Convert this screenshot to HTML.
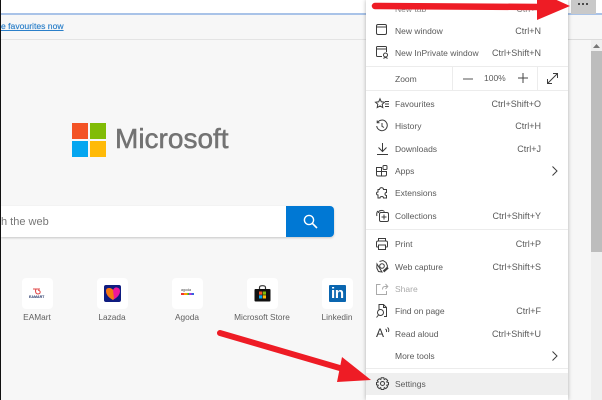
<!DOCTYPE html>
<html><head><meta charset="utf-8">
<style>
html,body{margin:0;padding:0;background:#f7f7f7}
#p{width:602px;height:400px;position:relative;overflow:hidden;background:#f7f7f7;font-family:"Liberation Sans",sans-serif;color:#444;filter:blur(.3px)}
.a{position:absolute;white-space:nowrap}
.m{position:absolute;left:395px;font-size:8.5px;line-height:12px;color:#5a5a5a;white-space:nowrap}
.k{position:absolute;right:61px;font-size:9px;line-height:12px;color:#5a5a5a;white-space:nowrap}
.t{position:absolute;width:31px;height:31px;background:#fff;border-radius:4px;top:278px}
.l{position:absolute;top:311px;font-size:8.3px;line-height:12px;color:#5f5f5f;text-align:center;white-space:nowrap;transform:translateX(-50%)}
svg{position:absolute;overflow:visible}
.i{fill:none;stroke:#3c3c3c;stroke-width:1}
</style></head><body><div id="p">
<div class="a" style="left:0;top:0;width:602px;height:13px;background:#fff"></div>
<div class="a" style="left:0;top:13px;width:602px;height:2px;background:#a9c3e8"></div>
<div class="a" style="left:0;top:39px;width:602px;height:1px;background:#e4e4e4"></div>
<div class="a" style="left:0;top:0;width:1px;height:400px;background:#111"></div>
<div class="a" style="left:1px;top:20px;font-size:8.600px;line-height:12px;color:#2a7fc9;text-decoration:underline;-webkit-text-stroke:.15px #2a7fc9">e favourites now</div>

<!-- MS logo -->
<div class="a" style="left:72px;top:123px;width:16px;height:16px;background:#f35325"></div>
<div class="a" style="left:90px;top:123px;width:16px;height:16px;background:#81bc06"></div>
<div class="a" style="left:72px;top:141px;width:16px;height:16px;background:#05a6f0"></div>
<div class="a" style="left:90px;top:141px;width:16px;height:16px;background:#ffba08"></div>
<div class="a" style="left:115px;top:122px;font-size:28px;line-height:34px;color:#737373;-webkit-text-stroke:.5px #737373">Microsoft</div>

<!-- Search -->
<div class="a" style="left:1px;top:206px;width:333px;height:31px;background:#fff;border-radius:0 4px 4px 0;box-shadow:0 1px 2px rgba(0,0,0,.2)"></div>
<div class="a" style="left:1px;top:214.500px;font-size:11px;line-height:14px;color:#777">h the web</div>
<div class="a" style="left:286px;top:206px;width:48px;height:31px;background:#0078d4;border-radius:0 4px 4px 0"></div>
<svg style="left:303px;top:214px" width="15" height="15" viewBox="0 0 15 15"><circle cx="6" cy="6" r="4.600" fill="none" stroke="#fff" stroke-width="1.400"/><path d="M9.300 9.300L14 14" stroke="#fff" stroke-width="1.600"/></svg>

<!-- Tiles -->
<div class="t" style="left:22px"></div>
<svg style="left:32px;top:288px" width="10" height="8" viewBox="0 0 10 8"><path d="M1 1H8M4 1Q3 3 4 5Q6 7 8 5Q9 3 6 2" fill="none" stroke="#e04848" stroke-width="1"/></svg>
<div class="a" style="left:29px;top:295px;font-size:3.600px;line-height:4px;font-weight:bold;color:#223366">EAMART</div>
<div class="l" style="left:37px">EAMart</div>
<div class="t" style="left:97px"></div>
<div class="a" style="left:104px;top:285px;width:17px;height:17px;background:#0f1c80;border-radius:2px"></div>
<svg style="left:105.500px;top:287px" width="14" height="13" viewBox="0 0 14 13"><path d="M0 4Q0 1 3 1Q5.500 1 7 3Q8.500 0 11 0.500Q14 1 14 4.500Q14 9 7 13Q0 9 0 4Z" fill="#f0189a"/><path d="M0 4Q0 1 3 1Q5.500 1 7 3L8 11.500L7 13Q0 9 0 4Z" fill="#f57a10"/></svg>
<div class="l" style="left:112px">Lazada</div>
<div class="t" style="left:172px"></div>
<div class="a" style="left:181px;top:288px;font-size:3.600px;line-height:4px;color:#444">agoda</div>
<div class="a" style="left:181px;top:293px;width:13px;height:2px;background:linear-gradient(90deg,#e33 0 25%,#f90 25% 50%,#3b3 50% 62%,#a3d 62% 80%,#36d 80%)"></div>
<div class="l" style="left:187px">Agoda</div>
<div class="t" style="left:247px"></div>
<svg style="left:254px;top:285px" width="17" height="17" viewBox="0 0 17 17"><path d="M5.500 4V2.500Q5.500 .7 8.500 .7Q11.500 .7 11.500 2.500V4" fill="none" stroke="#333" stroke-width="1.200"/><rect x="0.500" y="4" width="16" height="12.500" rx="1" fill="#111"/><rect x="5" y="6.500" width="3.200" height="3.200" fill="#f35325"/><rect x="8.800" y="6.500" width="3.200" height="3.200" fill="#81bc06"/><rect x="5" y="10.300" width="3.200" height="3.200" fill="#05a6f0"/><rect x="8.800" y="10.300" width="3.200" height="3.200" fill="#ffba08"/></svg>
<div class="l" style="left:262px">Microsoft Store</div>
<div class="t" style="left:322px"></div>
<div class="a" style="left:329px;top:285px;width:17px;height:17px;background:#0a66b0;border-radius:1px"></div>
<div class="a" style="left:331px;top:284px;font-size:15px;line-height:19px;font-weight:bold;color:#fff;letter-spacing:-.3px">in</div>
<div class="l" style="left:337px">Linkedin</div>

<!-- Right chrome -->
<div class="a" style="left:568px;top:15px;width:34px;height:385px;background:#f7f7f7"></div>
<div class="a" style="left:568px;top:39px;width:34px;height:1px;background:#dcdcdc"></div>
<div class="a" style="left:591px;top:40px;width:11px;height:360px;background:#efefef"></div>
<div class="a" style="left:591px;top:51px;width:11px;height:201px;background:#bdbdbd"></div>
<svg style="left:593px;top:44px" width="7" height="4"><path d="M0 4L3.500 0L7 4Z" fill="#777"/></svg>
<div class="a" style="left:571px;top:0;width:25px;height:14px;background:#c9c9c9"></div>
<div class="a" style="left:578px;top:3px;width:2px;height:2px;background:#222;border-radius:50%;box-shadow:4px 0 #222,8px 0 #222"></div>

<!-- Menu -->
<div class="a" style="left:366px;top:0;width:202px;height:400px;background:#fff;box-shadow:0 0 4px rgba(0,0,0,.3)"></div>
<div class="a" style="left:366px;top:66px;width:202px;height:1px;background:#ececec"></div>
<div class="a" style="left:366px;top:90px;width:202px;height:1px;background:#ececec"></div>
<div class="a" style="left:366px;top:229px;width:202px;height:1px;background:#ececec"></div>
<div class="a" style="left:366px;top:368px;width:202px;height:1px;background:#ececec"></div>
<div class="a" style="left:452px;top:67px;width:1px;height:23px;background:#ececec"></div>
<div class="a" style="left:537px;top:67px;width:1px;height:23px;background:#ececec"></div>
<div class="a" style="left:366px;top:373px;width:202px;height:22px;background:#efefef"></div>

<div class="m" style="top:3px;color:#888">New tab</div>
<div class="k" style="top:3px;color:#888">Ctrl+T</div>
<div class="m" style="top:25px">New window</div><div class="k" style="top:25px">Ctrl+N</div>
<div class="m" style="top:47px">New InPrivate window</div><div class="k" style="top:47px">Ctrl+Shift+N</div>
<div class="m" style="top:73px">Zoom</div>
<div class="a" style="left:484px;top:72px;font-size:8.500px;line-height:12px;color:#5a5a5a">100%</div>
<div class="m" style="top:98px">Favourites</div><div class="k" style="top:98px">Ctrl+Shift+O</div>
<div class="m" style="top:120px">History</div><div class="k" style="top:120px">Ctrl+H</div>
<div class="m" style="top:143px">Downloads</div><div class="k" style="top:143px">Ctrl+J</div>
<div class="m" style="top:165px">Apps</div>
<div class="m" style="top:187px">Extensions</div>
<div class="m" style="top:210px">Collections</div><div class="k" style="top:210px">Ctrl+Shift+Y</div>
<div class="m" style="top:238px">Print</div><div class="k" style="top:238px">Ctrl+P</div>
<div class="m" style="top:261px">Web capture</div><div class="k" style="top:261px">Ctrl+Shift+S</div>
<div class="m" style="top:283px;color:#aaa">Share</div>
<div class="m" style="top:305px">Find on page</div><div class="k" style="top:305px">Ctrl+F</div>
<div class="m" style="top:328px">Read aloud</div><div class="k" style="top:328px">Ctrl+Shift+U</div>
<div class="m" style="top:350px">More tools</div>
<div class="m" style="top:378px">Settings</div>

<!-- Icons -->
<svg class="i" style="left:376px;top:24px" width="12" height="12" viewBox="0 0 12 12"><rect x=".5" y=".5" width="10" height="10" rx="1.500"/><path d="M.5 3H10.500"/></svg>
<svg class="i" style="left:376px;top:46px" width="13" height="13" viewBox="0 0 13 13"><path d="M10.500 6V1.500Q10.500 .5 9.500 .5H1.500Q.5 .5 .5 1.500V9.500Q.5 10.500 1.500 10.500H6M.5 3H10.500"/><circle cx="9.500" cy="9" r="2"/><path d="M7.500 12.500Q9.500 10.500 11.500 12.500"/></svg>
<svg style="left:463px;top:78px" width="10" height="2"><path d="M0 1H10" stroke="#555"/></svg>
<svg style="left:518px;top:73px" width="10" height="10"><path d="M0 5H10M5 0V10" stroke="#444"/></svg>
<svg class="i" style="left:547px;top:73px" width="11" height="11" viewBox="0 0 11 11"><path d="M.5 10.500L10.500 .5M6 .5H10.500V5M.5 6V10.500H5"/></svg>
<svg class="i" style="left:375px;top:98px" width="14" height="12" viewBox="0 0 14 12"><path d="M5 .8L6.300 3.800L9.500 4.200L7.200 6.300L7.800 9.500L5 7.900L2.200 9.500L2.800 6.300L.5 4.200L3.700 3.800Z M10 3.500H14M10 6H14M10 8.500H14"/></svg>
<svg class="i" style="left:376px;top:120px" width="12" height="12" viewBox="0 0 12 12"><path d="M1.500 2.500A5.300 5.300 0 1 1 .7 6M1.200 .5V2.800H3.500M6 3V6.300L8 7.500"/></svg>
<svg class="i" style="left:377px;top:143px" width="11" height="12" viewBox="0 0 11 12"><path d="M5.500 0V8.500M1.500 4.500L5.500 8.500L9.500 4.500M0 11.500H11"/></svg>
<svg class="i" style="left:376px;top:165px" width="12" height="12" viewBox="0 0 12 12"><path d="M.5 2.500H5.500V11H2Q.5 11 .5 9.500ZM.5 6.500H10.500M5.500 6.500H10.500V9.500Q10.500 11 9 11H5.500"/><rect x="7" y=".5" width="4" height="4" rx="1"/></svg>
<svg class="i" style="left:376px;top:187px" width="12" height="12" viewBox="0 0 12 12"><path d="M3.500 2.500Q4 .5 6 .7Q7.500 1 7.500 2.500H10.500V5.500Q9 5.500 9 7Q9 8.500 10.500 8.500V11H7.500Q7.500 9.500 6 9.500Q4 9.500 4 11H2V8Q.5 8 .5 6.500Q.5 5 2 5V2.500Z"/></svg>
<svg class="i" style="left:376px;top:209px" width="13" height="13" viewBox="0 0 13 13"><rect x="3.500" y="3.500" width="9" height="9" rx="1.500"/><path d="M8 5.500V10.500M5.500 8H10.500M.9 7Q.2 3.500 2 2M2.500 4Q2.500 1.500 5 1.500M4.500 2Q6 .5 8.500 2.500"/></svg>
<svg class="i" style="left:376px;top:238px" width="12" height="12" viewBox="0 0 12 12"><path d="M2.500 3V.5H9.500V3M2.500 9H1Q.5 9 .5 8V4.500Q.5 3 2 3H10Q11.500 3 11.500 4.500V8Q11.500 9 11 9H9.500"/><rect x="2.500" y="7" width="7" height="4.500"/></svg>
<svg class="i" style="left:376px;top:260px" width="13" height="13" viewBox="0 0 13 13"><path d="M3.500 1.500L7 .5L10 2.500L11.500 6L10.500 9M6 12L2.500 11.500L.8 8L1 4Z"/><circle cx="6" cy="6" r="2.300"/><path d="M7.500 11.500L12 7.500" stroke-width="2.200"/></svg>
<svg class="i" style="left:376px;top:283px;stroke:#aaa" width="12" height="12" viewBox="0 0 12 12"><path d="M4.500 1.500H.5V11.500H10.500V8M6.500 6.500Q6.500 3.500 9 3.500H11.500M9.500 1L11.800 3.500L9.500 6"/></svg>
<svg class="i" style="left:376px;top:304px" width="12" height="14" viewBox="0 0 12 14"><path d="M3 5.500V.5H7.500L10.500 3.500V12.500H8M7.500 .5V3.500H10.500"/><circle cx="4.500" cy="8.500" r="3"/><path d="M2.500 11L.5 13.500"/></svg>
<div class="a" style="left:376px;top:326px;font-size:12px;line-height:14px;color:#333">A</div>
<svg class="i" style="left:385px;top:327px" width="5" height="6" viewBox="0 0 5 6"><path d="M.5 2Q2 3 1.500 5M2.500 .5Q4.500 2 3.500 5"/></svg>
<svg class="i" style="left:376px;top:377px" width="13" height="13" viewBox="0 0 13 13"><path d="M5.200 .7H7.800L8.200 2.500L9.800 1.700L11.700 3.500L10.700 5L12.500 5.500V7.800L10.700 8.200L11.600 9.800L9.800 11.600L8.300 10.700L7.800 12.500H5.200L4.700 10.700L3.200 11.600L1.400 9.800L2.300 8.200L.5 7.800V5.500L2.300 5L1.300 3.500L3.200 1.700L4.800 2.500Z"/><circle cx="6.500" cy="6.500" r="2"/></svg>
<svg class="i" style="left:552px;top:166px" width="6" height="10"><path d="M.5 .5L5 5L.5 9.500" stroke-width="1"/></svg>
<svg class="i" style="left:552px;top:351px" width="6" height="10"><path d="M.5 .5L5 5L.5 9.500" stroke-width="1"/></svg>

<!-- Red arrows -->
<svg style="left:0;top:0" width="602" height="400" viewBox="0 0 602 400">
<path d="M375 6L540 7" stroke="#ee1c25" stroke-width="6.500" stroke-linecap="round" fill="none"/>
<path d="M537 -3L537 20L570 6L550 -3Z" fill="#ee1c25"/>
<path d="M220 333L350 371" stroke="#ee1c25" stroke-width="6" stroke-linecap="round" fill="none"/>
<path d="M342 357L337 382L371 380Z" fill="#ee1c25"/>
</svg>
</div></body></html>
